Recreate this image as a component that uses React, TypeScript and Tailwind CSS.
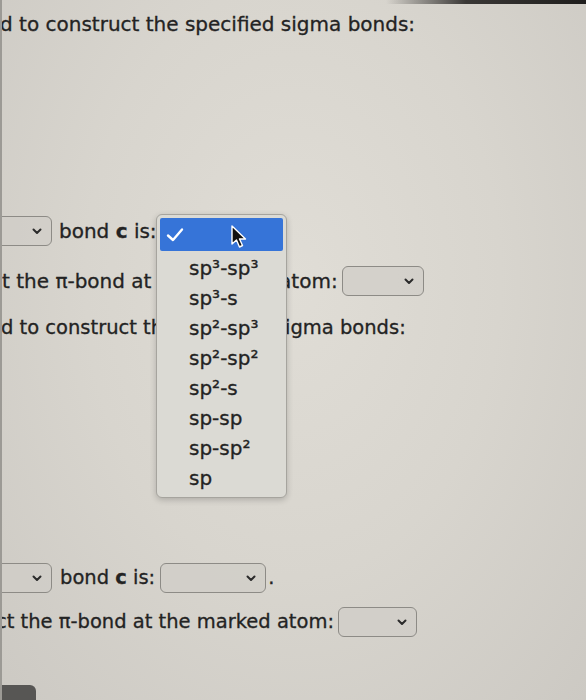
import React from 'react'

const items = ['sp³-sp³', 'sp³-s', 'sp²-sp³', 'sp²-sp²', 'sp²-s', 'sp-sp', 'sp-sp²', 'sp']

function Chevron() {
  return (
    <svg width="10" height="7" viewBox="0 0 10 7" className="shrink-0">
      <path d="M1.5 1.5 L5 5 L8.5 1.5" fill="none" stroke="#2b2b2b" strokeWidth="2" strokeLinecap="round" strokeLinejoin="round" />
    </svg>
  )
}

function Select({ className }: { className: string }) {
  return (
    <div className={`flex h-[30px] shrink-0 items-center justify-end rounded-md border-[1.5px] border-[#8d8b86] bg-[#d0cdc7]/70 pr-[9px] ${className}`}>
      <Chevron />
    </div>
  )
}

export default function App() {
  return (
    <div className="relative h-[700px] w-[586px] overflow-hidden bg-[radial-gradient(ellipse_at_50%_40%,#e0ddd6_0%,#d8d5ce_50%,#ccc9c3_100%)] font-['DejaVu_Sans',sans-serif] text-[20px] leading-none text-[#232323] [-webkit-text-stroke:0.3px_#232323]">
      {/* screen bezel at the top right corner */}
      <div className="absolute right-0 top-0 h-[4px] w-[200px] bg-[linear-gradient(90deg,transparent,#3a3836_40%,#1f1e1d)]" />
      <div className="absolute left-0 top-0 h-full w-[2px] bg-[#9c9a95]" />

      <div className="flex flex-col">
        <div className="flex h-[48px] items-center whitespace-nowrap">d to construct the specified sigma bonds:</div>

        <div className="mt-[168px] flex h-[30px] items-center whitespace-nowrap">
          <Select className="ml-[-10px] w-[62px]" />
          <span className="ml-[7px]">
            bond <b>c</b> is:
          </span>
        </div>

        <div className="mt-[20px] flex h-[30px] items-center whitespace-nowrap">
          <span className="ml-[-9px]">ct the π-bond at the marked atom:</span>
          <Select className="ml-[4px] w-[82px]" />
        </div>

        <div className="mt-[17px] flex h-[30px] items-center whitespace-nowrap text-[19.5px]">
          <span className="ml-[-11px]">ed to construct the specified sigma bonds:</span>
        </div>

        <div className="mt-[220px] flex h-[30px] items-center whitespace-nowrap text-[19.5px]">
          <Select className="ml-[-10px] w-[62px]" />
          <span className="ml-[8px]">
            bond <b>c</b> is:
          </span>
          <Select className="ml-[5px] w-[106px]" />
          <span className="ml-[2px]">.</span>
        </div>

        <div className="mt-[14px] flex h-[30px] items-center whitespace-nowrap text-[19.5px]">
          <span className="ml-[-4px]">ct the π-bond at the marked atom:</span>
          <Select className="ml-[4px] w-[79px]" />
        </div>

        <div className="mt-[48px] h-[20px] w-[36px] rounded-tr-md bg-[#575654]" />
      </div>

      {/* open dropdown menu */}
      <div className="absolute left-[156px] top-[214px] h-[284px] w-[131px] rounded-md border border-[#a6a49e] bg-[#dbdad4] p-[3px] shadow-[0_2px_6px_rgba(0,0,0,0.2)]">
        <div className="relative flex h-[33px] items-center rounded-[2px] bg-[#3674d8] pl-[5px]">
          <svg width="20" height="16" viewBox="0 0 20 16">
            <path d="M3 8.5 L8 13 L17 2.5" fill="none" stroke="#ffffff" strokeWidth="2.4" strokeLinecap="round" strokeLinejoin="round" />
          </svg>
          <svg width="18" height="26" viewBox="0 0 18 26" className="absolute left-[70px] top-[7px] [-webkit-text-stroke:0]">
            <path d="M2 1 L2 19 L6.5 15 L9.5 22 L12.5 20.5 L9.5 14 L15.5 14 Z" fill="#111111" stroke="#ffffff" strokeWidth="1.4" strokeLinejoin="round" />
          </svg>
        </div>
        <div className="mt-[2px] flex flex-col">
          {items.map(it => (
            <div key={it} className="flex h-[30px] items-center whitespace-nowrap pl-[29px] text-[20px]">
              {it}
            </div>
          ))}
        </div>
      </div>
    </div>
  )
}
